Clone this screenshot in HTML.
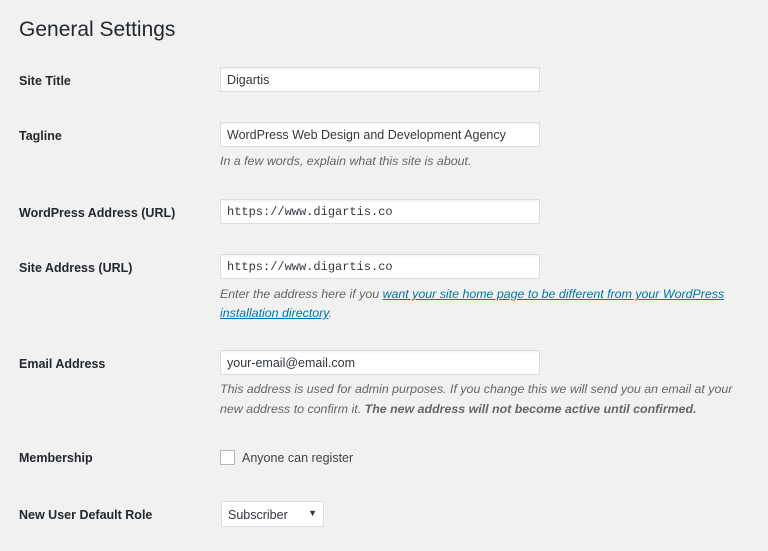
<!DOCTYPE html>
<html><head><meta charset="utf-8"><style>
*{box-sizing:border-box;margin:0;padding:0}
body{width:768px;height:551px;background:#f1f1f1;font-family:"Liberation Sans",sans-serif;color:#23282d;position:relative;overflow:hidden}
.a{position:absolute;white-space:nowrap}
h1{position:absolute;left:19px;top:18px;font-size:21px;font-weight:400;color:#23282d}
.l{left:19px;font-size:12.5px;font-weight:bold;color:#23282d}
.i{position:absolute;left:220px;width:320px;height:25px;background:#fff;border:1px solid #ddd;box-shadow:inset 0 1px 2px rgba(0,0,0,.07);font-size:12.5px;padding:5px 6px;color:#32373c}
.m{font-family:"Liberation Mono",monospace;font-size:12px}
.d{left:220px;font-size:12.4px;font-style:italic;color:#666}
a{color:#0073aa;text-decoration:underline}
</style></head><body>
<h1>General Settings</h1>
<div class="a l" style="top:74px">Site Title</div>
<div class="i" style="top:67px">Digartis</div>
<div class="a l" style="top:129px">Tagline</div>
<div class="i" style="top:122px">WordPress Web Design and Development Agency</div>
<div class="a d" style="top:154px">In a few words, explain what this site is about.</div>
<div class="a l" style="top:206px">WordPress Address (URL)</div>
<div class="i m" style="top:199px">https://www.digartis.co</div>
<div class="a l" style="top:261px">Site Address (URL)</div>
<div class="i m" style="top:254px">https://www.digartis.co</div>
<div class="a d" style="top:287px">Enter the address here if you <a>want your site home page to be different from your WordPress</a></div>
<div class="a d" style="top:306px"><a>installation directory</a>.</div>
<div class="a l" style="top:357px">Email Address</div>
<div class="i" style="top:350px">your-email@email.com</div>
<div class="a d" style="top:382px">This address is used for admin purposes. If you change this we will send you an email at your</div>
<div class="a d" style="top:402px">new address to confirm it. <b>The new address will not become active until confirmed.</b></div>
<div class="a l" style="top:451px">Membership</div>
<div class="a" style="left:220px;top:450px;width:15px;height:15px;background:#fff;border:1px solid #b4b9be"></div>
<div class="a" style="left:242px;top:451px;font-size:12.5px;color:#444">Anyone can register</div>
<div class="a l" style="top:508px">New User Default Role</div>
<div class="a" style="left:221px;top:501px;width:103px;height:26px;background:#fff;border:1px solid #ddd;font-size:12.5px;padding:6px 6px;color:#32373c">Subscriber<span style="position:absolute;right:6px;top:6px;font-size:9px">▼</span></div>
</body></html>
